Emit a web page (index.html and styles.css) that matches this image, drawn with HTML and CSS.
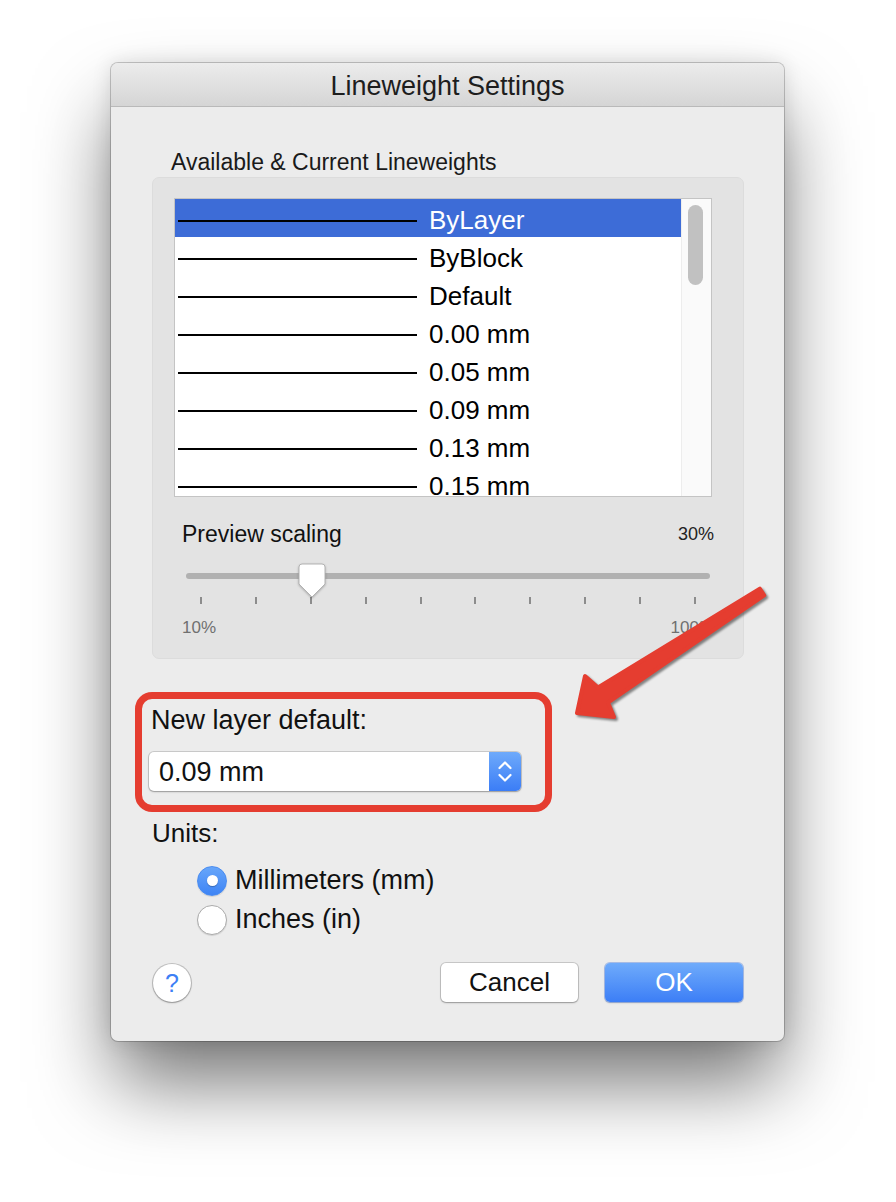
FILE: index.html
```html
<!DOCTYPE html>
<html>
<head>
<meta charset="utf-8">
<title>Lineweight Settings</title>
<link rel="stylesheet" href="styles.css">
</head>
<body>
<div class="stage">
  <div class="window">
    <div class="titlebar">Lineweight Settings</div>
    <div class="content">
      <div class="group-label">Available &amp; Current Lineweights</div>
      <div class="group">
        <div class="list">
          <div class="rows">
            <div class="row selected"><span class="line"></span><span class="name">ByLayer</span></div>
            <div class="row"><span class="line"></span><span class="name">ByBlock</span></div>
            <div class="row"><span class="line"></span><span class="name">Default</span></div>
            <div class="row"><span class="line"></span><span class="name">0.00 mm</span></div>
            <div class="row"><span class="line"></span><span class="name">0.05 mm</span></div>
            <div class="row"><span class="line"></span><span class="name">0.09 mm</span></div>
            <div class="row"><span class="line"></span><span class="name">0.13 mm</span></div>
            <div class="row"><span class="line"></span><span class="name">0.15 mm</span></div>
          </div>
          <div class="scrollbar"><div class="knob"></div></div>
        </div>
        <div class="scale-head"><span class="scale-title">Preview scaling</span><span class="scale-pct">30%</span></div>
        <div class="slider">
          <div class="track"></div>
          <svg class="thumb" width="28" height="36" viewBox="0 0 28 36"><path d="M4 1 H24 Q27 1 27 4 V21 L14 34 L1 21 V4 Q1 1 4 1 Z" fill="#fff" stroke="#b3b3b3" stroke-width="1"/></svg>
        </div>
        <div class="ticks"><span></span><span></span><span></span><span></span><span></span><span></span><span></span><span></span><span></span><span></span></div>
        <div class="scale-foot"><span>10%</span><span>100%</span></div>
      </div>
      <div class="highlight">
        <div class="field-label">New layer default:</div>
        <div class="popup">
          <span class="popup-value">0.09 mm</span>
          <span class="stepper"><svg width="32" height="39" viewBox="0 0 32 39"><path d="M10.5 16 L16 10.5 L21.5 16 M10.5 23 L16 28.5 L21.5 23" fill="none" stroke="#fff" stroke-width="2.2" stroke-linecap="round" stroke-linejoin="round"/></svg></span>
        </div>
      </div>
      <div class="units-label">Units:</div>
      <div class="radios">
        <div class="radio-row"><span class="radio on"><span class="dot"></span></span><span>Millimeters (mm)</span></div>
        <div class="radio-row"><span class="radio"></span><span>Inches (in)</span></div>
      </div>
      <div class="buttons">
        <span class="help">?</span>
        <span class="btn cancel">Cancel</span>
        <span class="btn ok">OK</span>
      </div>
    </div>
  </div>
  <svg class="arrow" width="230" height="160" viewBox="560 570 230 160"><path d="M759.8 588.6 L598 687.5 L585 676 L577 713 L614 717 L608 702.5 L764.2 595.4 Z" fill="#e53d30" stroke="#e53d30" stroke-width="4" stroke-linejoin="round"/></svg>
</div>
</body>
</html>
```
FILE: styles.css
```css
* { box-sizing: border-box; }
html, body { margin: 0; background: #fff; }
body {
  font-family: "Liberation Sans", Arial, sans-serif;
  color: #111;
  width: 896px;
  height: 1202px;
  overflow: hidden;
}
.stage {
  position: relative;
  padding: 63px 0 0 111px;
  height: 1202px;
}
.window {
  width: 673px;
  background: #ececec;
  border-radius: 7px;
  box-shadow: 0 0 0 1px rgba(0,0,0,0.2), 0 45px 80px -4px rgba(0,0,0,0.55), 0 0 20px rgba(0,0,0,0.12);
  overflow: hidden;
}
.titlebar {
  height: 44px;
  background: linear-gradient(#ececec, #d5d5d5);
  border-bottom: 1px solid #b9b9b9;
  text-align: center;
  font-size: 27px;
  line-height: 47px;
  color: #1d1d1d;
}
.content { padding: 43px 40px 39px 41px; }
.group-label { font-size: 23px; line-height: 24px; margin-left: 19px; color: #1a1a1a; }
.group {
  margin-top: 3px;
  background: #e3e3e3;
  border: 1px solid #dcdcdc;
  border-radius: 7px;
  padding: 20px 31px 20px 21px;
}
.list {
  height: 299px;
  border: 1px solid #c4c4c4;
  background: #fff;
  display: flex;
  overflow: hidden;
}
.rows { flex: 1; overflow: hidden; }
.row {
  height: 38px;
  display: flex;
  align-items: center;
  padding-top: 5px;
  padding-left: 3px;
  font-size: 26px;
  color: #000;
}
.row.selected { background: #3d6cd7; color: #fff; }
.line { width: 239px; height: 2px; background: #000; margin-right: 12px; flex: none; }
.scrollbar {
  width: 30px;
  background: #fafafa;
  border-left: 1px solid #ededed;
  padding: 6px 0 0 6px;
}
.knob { width: 15px; height: 80px; background: #c1c1c1; border-radius: 8px; }
.scale-head {
  margin-top: 25px;
  display: flex;
  justify-content: space-between;
  align-items: center;
  margin-left: 8px;
  margin-right: -2px;
  height: 24px;
}
.scale-title { font-size: 23px; line-height: 24px; color: #111; }
.scale-pct { font-size: 18px; line-height: 24px; color: #222; }
.slider { position: relative; margin-top: 18px; height: 33px; }
.track {
  margin: 0 2px 0 12px;
  position: relative;
  top: 9px;
  height: 6px;
  border-radius: 3px;
  background: #b1b1b1;
}
.thumb {
  position: absolute;
  left: 124px;
  top: -1px;
  filter: drop-shadow(0 1px 1px rgba(0,0,0,0.25));
}
.ticks {
  display: flex;
  justify-content: space-between;
  margin: 0 16px 0 26px;
  height: 7px;
}
.ticks span { width: 2px; height: 7px; background: #8c8c8c; }
.scale-foot {
  margin-top: 14px;
  display: flex;
  justify-content: space-between;
  margin-left: 8px;
  margin-right: -2px;
  font-size: 17px;
  line-height: 20px;
  color: #707070;
}
.highlight {
  margin-top: 33px;
  margin-left: -17px;
  width: 417px;
  border: 7px solid #e53d30;
  border-radius: 17px;
  padding: 7px 0 14px 0;
}
.field-label { font-size: 27px; line-height: 28px; margin-left: 9px; color: #111; }
.popup {
  margin-top: 18px;
  margin-left: 7px;
  width: 372px;
  height: 39px;
  display: flex;
  background: #fff;
  border-radius: 5px;
  box-shadow: 0 0 0 1px rgba(0,0,0,0.14), 0 1px 2px rgba(0,0,0,0.25);
  overflow: hidden;
}
.popup-value { flex: 1; padding-left: 10px; font-size: 27px; line-height: 40px; color: #111; }
.stepper {
  width: 32px;
  height: 39px;
  background: linear-gradient(#6eaafb, #3b7df6);
  display: block;
}
.stepper svg { display: block; }
.units-label { margin-top: 7px; font-size: 26px; line-height: 28px; color: #111; }
.radios { margin-top: 14px; margin-left: 45px; }
.radio-row {
  height: 39px;
  display: flex;
  align-items: center;
  gap: 8px;
  font-size: 27px;
  color: #111;
}
.radio {
  width: 30px;
  height: 30px;
  border-radius: 50%;
  background: #fff;
  border: 1px solid #ababab;
  box-shadow: 0 1px 1px rgba(0,0,0,0.12);
  display: flex;
  align-items: center;
  justify-content: center;
  flex: none;
}
.radio.on { background: linear-gradient(#67a6fa, #3e84f5); border-color: #4a8cf0; }
.dot { width: 11px; height: 11px; border-radius: 50%; background: #fff; box-shadow: 0 1px 1px rgba(0,0,0,0.25); }
.buttons { margin-top: 24px; display: flex; align-items: center; height: 39px; }
.help {
  width: 38px;
  height: 38px;
  border-radius: 50%;
  background: #fff;
  box-shadow: 0 0 0 1px rgba(0,0,0,0.18), 0 1px 2px rgba(0,0,0,0.25);
  color: #3d7ff5;
  font-size: 25px;
  line-height: 38px;
  text-align: center;
  margin-left: 1px;
  margin-right: auto;
}
.btn {
  height: 39px;
  border-radius: 5px;
  font-size: 26px;
  line-height: 39px;
  text-align: center;
}
.cancel {
  width: 137px;
  background: #fff;
  color: #111;
  box-shadow: 0 0 0 1px rgba(0,0,0,0.15), 0 1px 2px rgba(0,0,0,0.25);
  margin-right: 27px;
}
.ok {
  width: 138px;
  background: linear-gradient(#6fabfb, #3c7ef6);
  color: #fff;
  box-shadow: 0 0 0 1px rgba(40,100,220,0.35), 0 1px 2px rgba(0,0,0,0.2);
  margin-right: 1px;
}
.arrow {
  position: absolute;
  left: 560px;
  top: 570px;
  pointer-events: none;
  filter: drop-shadow(2px 2px 1px rgba(0,0,0,0.45));
}
```
